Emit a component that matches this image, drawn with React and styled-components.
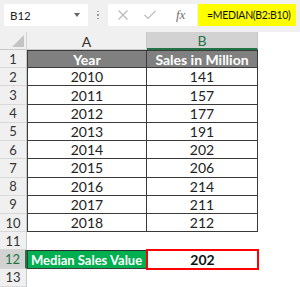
import React from "react";
import styled, { createGlobalStyle, css } from "styled-components";

const Global = createGlobalStyle`
  html, body { margin: 0; padding: 0; background: #ffffff; }
  body { font-family: "Lato", "Liberation Sans", sans-serif; overflow: hidden; }
`;

const Page = styled.div`
  width: 300px;
  height: 287px;
  overflow: hidden;
  background: #ffffff;
`;

const Toolbar = styled.div`
  height: 32px;
  box-sizing: border-box;
  padding: 4px 4px 6px 4px;
  background: #f0f0f0;
  display: flex;
  align-items: stretch;
  & > * { flex-shrink: 0; }
`;

const NameBox = styled.div`
  width: 84px;
  background: #ffffff;
  display: flex;
  align-items: center;
  justify-content: space-between;
  padding: 0 8px 0 6px;
  box-sizing: border-box;
  font-size: 11.5px;
  color: #222;
`;

const Arrow = styled.span`
  width: 0;
  height: 0;
  border-left: 3.5px solid transparent;
  border-right: 3.5px solid transparent;
  border-top: 4px solid #666;
`;

const Dots = styled.div`
  width: 20px;
  display: flex;
  flex-direction: column;
  align-items: center;
  justify-content: center;
  gap: 2px;
  span {
    width: 1.5px;
    height: 1.5px;
    background: #9a9a9a;
  }
`;

const FxButtons = styled.div`
  width: 89px;
  background: #ffffff;
  display: flex;
  align-items: center;
  gap: 16px;
  padding-left: 10px;
  box-sizing: border-box;
`;

const Fx = styled.span`
  font-family: "Liberation Serif", serif;
  font-style: italic;
  font-size: 13px;
  color: #6e6e6e;
  margin-left: 4px;
`;

const FormulaBar = styled.div`
  flex: 1 1 auto !important;
  margin-left: 1px;
  background: #ffff00;
  display: flex;
  align-items: center;
  padding-left: 9px;
  font-size: 10.5px;
  letter-spacing: -0.3px;
  color: #111;
  white-space: nowrap;
  overflow: hidden;
`;

const Sheet = styled.div`
  display: grid;
  grid-template-columns: 27px 120px 111px 1fr;
  grid-template-rows: 18px repeat(13, 18.23px);
`;

const Corner = styled.div`
  background: #f0f0f0;
  border-right: 1px solid #d4d4d4;
  border-bottom: 1px solid #c8c8c8;
  position: relative;
  &::after {
    content: "";
    position: absolute;
    right: 2px;
    bottom: 2px;
    width: 0;
    height: 0;
    border-left: 12px solid transparent;
    border-bottom: 12px solid #c4c4c4;
  }
`;

const ColHead = styled.div`
  background: ${(p) => (p.$selected ? "#d2d2d2" : "#f0f0f0")};
  color: ${(p) => (p.$selected ? "#217346" : "#333")};
  border-right: 1px solid #c8c8c8;
  border-bottom: ${(p) => (p.$selected ? "2px solid #217346" : "1px solid #c8c8c8")};
  display: flex;
  align-items: center;
  justify-content: center;
  font-size: 14px;
  box-sizing: border-box;
  padding-top: 1px;
`;

const RowHead = styled.div`
  background: ${(p) => (p.$selected ? "#d2d2d2" : "#f0f0f0")};
  color: ${(p) => (p.$selected ? "#217346" : "#333")};
  border-right: ${(p) => (p.$selected ? "2px solid #217346" : "1px solid #c8c8c8")};
  border-bottom: 1px solid #d8d8d8;
  display: flex;
  align-items: center;
  justify-content: center;
  font-size: 13px;
  box-sizing: border-box;
`;

const variants = {
  head: css`
    background: #808080;
    color: #ffffff;
    font-weight: 700;
    border-top: 1px solid #3a3a3a;
  `,
  data: css`
    background: #ffffff;
    color: #222;
  `,
  label: css`
    background: #00b050;
    color: #ffffff;
    font-weight: 700;
    font-size: 13px;
    justify-content: flex-start;
    padding-left: 3px;
    border-top: 1px solid #2a2a2a;
  `,
  result: css`
    background: #ffffff;
    color: #111;
    font-weight: 700;
    border: 2px solid #ff0000 !important;
    margin: -1px -1px -1px -1px;
    position: relative;
    z-index: 1;
  `,
};

const Cell = styled.div`
  display: flex;
  align-items: center;
  justify-content: center;
  font-size: 14px;
  white-space: nowrap;
  overflow: hidden;
  box-sizing: border-box;
  border-bottom: 1px solid #3a3a3a;
  border-right: 1px solid #3a3a3a;
  ${(p) => p.$first && css`border-left: 1px solid #3a3a3a;`}
  ${(p) => variants[p.$variant || "data"]}
`;

const Blank = styled.div`
  background: #ffffff;
`;

const rows = [
  ["2010", "141"],
  ["2011", "157"],
  ["2012", "177"],
  ["2013", "191"],
  ["2014", "202"],
  ["2015", "206"],
  ["2016", "214"],
  ["2017", "211"],
  ["2018", "212"],
];

const XIcon = () => (
  <svg width="10" height="10" viewBox="0 0 10 10">
    <path d="M0.5 0.5L9.5 9.5M9.5 0.5L0.5 9.5" stroke="#b8b8b8" strokeWidth="1.2" fill="none" />
  </svg>
);

const CheckIcon = () => (
  <svg width="12" height="10" viewBox="0 0 12 10">
    <path d="M0.5 5L4 8.5L11.5 0.8" stroke="#b8b8b8" strokeWidth="1.2" fill="none" />
  </svg>
);

export default function App() {
  return (
    <Page>
      <Global />
      <Toolbar>
        <NameBox>
          <span>B12</span>
          <Arrow />
        </NameBox>
        <Dots>
          <span />
          <span />
          <span />
        </Dots>
        <FxButtons>
          <XIcon />
          <CheckIcon />
          <Fx>fx</Fx>
        </FxButtons>
        <FormulaBar>=MEDIAN(B2:B10)</FormulaBar>
      </Toolbar>
      <Sheet>
        <Corner />
        <ColHead>A</ColHead>
        <ColHead $selected>B</ColHead>
        <Blank />

        <RowHead>1</RowHead>
        <Cell $variant="head" $first>Year</Cell>
        <Cell $variant="head">Sales in Million</Cell>
        <Blank />

        {rows.map(([y, v], i) => (
          <React.Fragment key={y}>
            <RowHead>{i + 2}</RowHead>
            <Cell $first>{y}</Cell>
            <Cell>{v}</Cell>
            <Blank />
          </React.Fragment>
        ))}

        <RowHead>11</RowHead>
        <Blank />
        <Blank />
        <Blank />

        <RowHead $selected>12</RowHead>
        <Cell $variant="label" $first>Median Sales Value</Cell>
        <Cell $variant="result">202</Cell>
        <Blank />

        <RowHead>13</RowHead>
        <Blank />
        <Blank />
        <Blank />
      </Sheet>
    </Page>
  );
}
